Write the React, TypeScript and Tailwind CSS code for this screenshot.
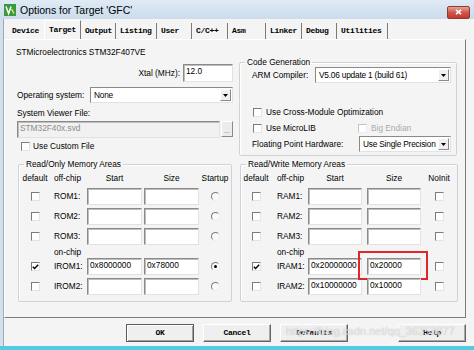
import type { ReactNode } from 'react'

const tabs = [
  { label: 'Device', w: 'w-[36px]', edge: false },
  { label: 'Target', w: 'w-[37px]', edge: true, active: true },
  { label: 'Output', w: 'w-[35px]', edge: true },
  { label: 'Listing', w: 'w-[41px]', edge: true },
  { label: 'User', w: 'w-[35px]', edge: true },
  { label: 'C/C++', w: 'w-[36px]', edge: true },
  { label: 'Asm', w: 'w-[38px]', edge: true },
  { label: 'Linker', w: 'w-[36px]', edge: true },
  { label: 'Debug', w: 'w-[35px]', edge: true },
  { label: 'Utilities', w: 'w-[51px]', edge: true },
]

function Check({ checked = false, disabled = false }: { checked?: boolean; disabled?: boolean }) {
  return (
    <span
      className={`flex h-[9px] w-[9px] shrink-0 items-center justify-center border bg-white ${
        disabled
          ? 'border-t-[#c4c4c4] border-l-[#c4c4c4] border-r-[#ececec] border-b-[#ececec]'
          : 'border-t-[#7c7c7c] border-l-[#7c7c7c] border-r-[#e4e4e4] border-b-[#e4e4e4]'
      }`}
    >
      {checked ? (
        <svg width="7" height="6" viewBox="0 0 7 6">
          <path d="M0.8 2.8 L2.6 4.6 L6.2 0.8" stroke="#000" strokeWidth="1.4" fill="none" />
        </svg>
      ) : null}
    </span>
  )
}

function Radio({ checked = false }: { checked?: boolean }) {
  return (
    <span className="flex h-[9px] w-[9px] items-center justify-center rounded-full border border-t-[#7c7c7c] border-l-[#7c7c7c] border-r-[#ececec] border-b-[#ececec] bg-[#fafafa]">
      {checked ? <span className="h-[3px] w-[3px] rounded-full bg-black" /> : null}
    </span>
  )
}

function Field({ value = '', w, disabled = false }: { value?: string; w: string; disabled?: boolean }) {
  return (
    <div
      className={`h-[17px] border border-t-[#8a8a8a] border-l-[#8a8a8a] border-r-[#e2e2e2] border-b-[#e2e2e2] pl-[2px] leading-[13px] shadow-[inset_1px_1px_0_#bdbdbd] ${
        disabled ? 'bg-[#f1f1f1] text-[#8c8c8c]' : 'bg-white'
      } ${w}`}
    >
      {value}
    </div>
  )
}

function Select({ value, w }: { value: string; w: string }) {
  return (
    <div className={`flex h-[16px] items-stretch border border-t-[#8a8a8a] border-l-[#8a8a8a] border-r-[#e2e2e2] border-b-[#e2e2e2] bg-white ${w}`}>
      <span className="min-w-0 flex-1 overflow-hidden whitespace-nowrap pl-[3px] leading-[14px] tracking-[-0.2px]">{value}</span>
      <span className="m-[1px] flex w-[11px] shrink-0 items-center justify-center border border-t-white border-l-white border-r-[#8a8a8a] border-b-[#8a8a8a] bg-[#efefef]">
        <svg width="5" height="3" viewBox="0 0 5 3">
          <path d="M0 0H5L2.5 3Z" fill="#000" />
        </svg>
      </span>
    </div>
  )
}

function Group({ title, className, children }: { title: string; className: string; children: ReactNode }) {
  return (
    <fieldset className={`rounded-[2px] border border-[#cdd3d8] shadow-[inset_1px_1px_0_#ffffff] ${className}`}>
      <legend className="ml-[5px] px-[2px] leading-[10px]">{title}</legend>
      {children}
    </fieldset>
  )
}

type MemRow = { name: string; start?: string; size?: string; def?: boolean; mark?: boolean; flag?: boolean }

function MemoryArea({ ram }: { ram: boolean }) {
  const cols = ram
    ? 'grid-cols-[30px_37px_54px_5px_54px_36px]'
    : 'grid-cols-[32px_36px_55px_2px_55px_32px]'
  const off: MemRow[] = ram
    ? [{ name: 'RAM1:' }, { name: 'RAM2:' }, { name: 'RAM3:' }]
    : [{ name: 'ROM1:' }, { name: 'ROM2:' }, { name: 'ROM3:' }]
  const on: MemRow[] = ram
    ? [
        { name: 'IRAM1:', start: '0x20000000', size: '0x20000', def: true, mark: true },
        { name: 'IRAM2:', start: '0x10000000', size: '0x10000' },
      ]
    : [
        { name: 'IROM1:', start: '0x8000000', size: '0x78000', def: true, flag: true },
        { name: 'IROM2:' },
      ]
  const pad = ram ? 'pl-[6px]' : 'pl-[3px]'

  const row = (r: MemRow, cls: string) => (
    <div key={r.name} className={`grid h-[17px] items-center ${cols} ${cls}`}>
      <span className="flex justify-center">
        <Check checked={r.def} />
      </span>
      <span className={pad}>{r.name}</span>
      <Field value={r.start} w="w-full" />
      <span />
      <div className="relative">
        <Field value={r.size} w="w-full" />
        {r.mark ? (
          <span className="absolute -top-[7px] -bottom-[5px] -left-[9px] -right-[7px] border-2 border-[#e0262b]" />
        ) : null}
      </div>
      <span className="flex justify-center">{ram ? <Check /> : <Radio checked={r.flag} />}</span>
    </div>
  )

  return (
    <div className="pb-[6px]">
      <div className={`mt-[4px] grid h-[10px] items-center leading-[10px] ${cols}`}>
        <span className="text-center">default</span>
        <span className={pad}>off-chip</span>
        <span className="text-center">Start</span>
        <span />
        <span className="text-center">Size</span>
        <span className="text-center">{ram ? 'NoInit' : 'Startup'}</span>
      </div>
      {off.map((r, i) => row(r, i === 0 ? 'mt-[5px]' : 'mt-[3px]'))}
      <div className={`mt-[2px] grid h-[10px] leading-[10px] ${cols}`}>
        <span />
        <span className={pad}>on-chip</span>
      </div>
      {on.map((r, i) => row(r, i === 0 ? 'mt-[1px]' : 'mt-[3px]'))}
    </div>
  )
}

function DlgButton({ label, primary = false }: { label: string; primary?: boolean }) {
  return (
    <div
      className={`flex h-[18px] w-[68px] items-center justify-center border bg-[#efefef] font-['Liberation_Mono',monospace] text-[8px] font-bold tracking-[-0.3px] ${
        primary
          ? 'border-[#5c5c5c] shadow-[inset_1px_1px_0_#ffffff,inset_-1px_-1px_0_#a0a0a0]'
          : 'border-t-white border-l-white border-r-[#666666] border-b-[#666666] shadow-[inset_-1px_-1px_0_#a8a8a8]'
      }`}
    >
      {label}
    </div>
  )
}

export default function App() {
  return (
    <div className="relative flex h-[350px] w-[474px] flex-col overflow-hidden bg-[#cfe0f0] font-['Liberation_Sans',Arial,sans-serif] text-[8.3px] text-black">
      {/* title bar */}
      <div className="flex h-[19px] shrink-0 items-center bg-gradient-to-b from-[#dfeaf5] to-[#cbdcec] pl-[4px] pr-[4px]">
        <svg width="12" height="12" viewBox="0 0 12 12">
          <rect width="12" height="12" fill="#3a9a3e" />
          <path d="M2 2.5 L4.6 9.5 L7 2.5" stroke="#ffffff" strokeWidth="1.5" fill="none" />
          <path d="M7.5 5 L10 9.5" stroke="#f2e86a" strokeWidth="1.3" />
        </svg>
        <span className="ml-[4px] text-[10.5px] leading-[12px]">Options for Target &apos;GFC&apos;</span>
        <div className="mt-[5px] ml-auto flex h-[13px] w-[23px] items-center justify-center rounded-[2px] border border-[#8d3a33] bg-gradient-to-b from-[#e7a197] via-[#d0564a] to-[#c2392c]">
          <svg width="7" height="6" viewBox="0 0 7 6">
            <path d="M1 0.8 L6 5.2 M6 0.8 L1 5.2" stroke="#ffffff" strokeWidth="1.6" />
          </svg>
        </div>
      </div>

      {/* body */}
      <div className="flex min-h-0 flex-1">
        <div className="w-[3px] bg-[#cfe0f0]" />
        <div className="flex flex-1 flex-col border-l border-[#a7a7a7] bg-[#f4f4f4]">
          {/* tabs */}
          <div className="flex h-[20px] items-end pl-[4px] font-['Liberation_Mono',monospace] text-[8px] font-bold tracking-[-0.3px]">
            {tabs.map((t) => (
              <div
                key={t.label}
                className={`flex items-center pl-[4px] ${t.w} ${
                  t.active ? 'h-[19px] border-t border-l border-t-white border-l-white' : 'h-[16px]'
                } ${t.edge ? 'border-r border-r-[#7a7a7a]' : ''}`}
              >
                {t.label}
              </div>
            ))}
          </div>

          {/* tab page */}
          <div className="mr-[8px] flex h-[279px] border border-t-white border-l-white border-r-[#7a7a7a] border-b-[#7a7a7a] pl-[11px]">
            {/* left column */}
            <div className="flex w-[218px] flex-col">
              <div className="mt-[7px] h-[10px] leading-[10px]">STMicroelectronics STM32F407VE</div>
              <div className="mt-[7px] flex h-[18px] items-center justify-end gap-[3px] pr-[1px]">
                <span>Xtal (MHz):</span>
                <div className="h-[18px] w-[50px] border border-t-[#8a8a8a] border-l-[#8a8a8a] border-r-[#e2e2e2] border-b-[#e2e2e2] bg-white pl-[2px] leading-[13px] shadow-[inset_1px_1px_0_#bdbdbd]">
                  12.0
                </div>
              </div>
              <div className="mt-[5px] flex h-[16px] items-center pl-[1px]">
                <span className="w-[73px]">Operating system:</span>
                <Select value="None" w="w-[143px]" />
              </div>
              <div className="mt-[5px] h-[10px] pl-[1px] leading-[10px]">System Viewer File:</div>
              <div className="mt-[3px] flex h-[16px] items-start pl-[1px]">
                <Field value="STM32F40x.svd" w="w-[203px]" disabled />
                <div className="ml-[1px] flex h-[16px] w-[12px] items-end justify-center border border-t-white border-l-white border-r-[#8a8a8a] border-b-[#8a8a8a] bg-[#ececec] pb-[2px] text-[7px] leading-[7px] text-[#666666]">
                  ...
                </div>
              </div>
              <div className="mt-[4px] flex h-[10px] items-center gap-[3px] pl-[5px]">
                <Check />
                <span>Use Custom File</span>
              </div>
              <Group title="Read/Only Memory Areas" className="mt-[8px] ml-[2px] w-[214px]">
                <MemoryArea ram={false} />
              </Group>
            </div>

            {/* right column */}
            <div className="ml-[5px] flex w-[219px] flex-col">
              <Group title="Code Generation" className="mt-[17px] w-[218px]">
                <div className="pr-[5px] pb-[3px]">
                  <div className="flex h-[16px] items-center pl-[12px]">
                    <span className="w-[63px]">ARM Compiler:</span>
                    <Select value="V5.06 update 1 (build 61)" w="w-[136px]" />
                  </div>
                  <div className="mt-[24px] flex h-[10px] items-center gap-[4px] pl-[13px]">
                    <Check />
                    <span>Use Cross-Module Optimization</span>
                  </div>
                  <div className="mt-[6px] flex h-[10px] items-center pl-[13px]">
                    <div className="flex w-[105px] items-center gap-[4px]">
                      <Check />
                      <span>Use MicroLIB</span>
                    </div>
                    <div className="flex items-center gap-[4px] text-[#a9a9a9]">
                      <Check disabled />
                      <span>Big Endian</span>
                    </div>
                  </div>
                  <div className="mt-[3px] flex h-[16px] items-center pl-[12px]">
                    <span className="w-[107px]">Floating Point Hardware:</span>
                    <Select value="Use Single Precision" w="w-[92px]" />
                  </div>
                </div>
              </Group>
              <Group title="Read/Write Memory Areas" className="mt-[3px] ml-[1px] w-[218px]">
                <MemoryArea ram />
              </Group>
            </div>
          </div>

          {/* buttons */}
          <div className="flex flex-1 items-start pt-[6px] pl-[122px] pr-[8px]">
            <DlgButton label="OK" primary />
            <div className="ml-[9px]">
              <DlgButton label="Cancel" />
            </div>
            <div className="ml-[9px]">
              <DlgButton label="Defaults" />
            </div>
            <div className="ml-auto">
              <DlgButton label="Help" />
            </div>
          </div>
        </div>
      </div>
      <div className="h-[4px] shrink-0 bg-[#52cbe3]" />

      <span className="absolute top-[324px] left-[286px] text-[11px] leading-[14px] text-white/60 [text-shadow:0_0_1px_#b0b0b0]">
        https://blog.csdn.net/qq_36353877
      </span>
    </div>
  )
}
